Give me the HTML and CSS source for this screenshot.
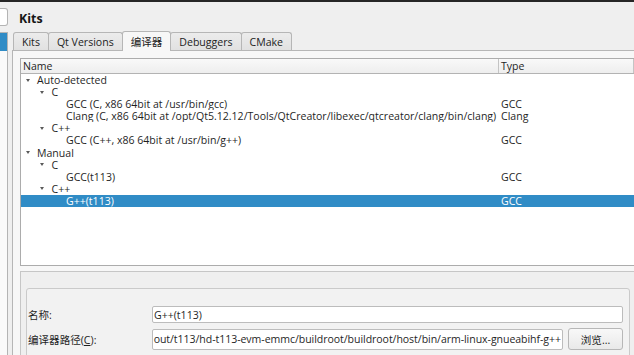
FILE: index.html
```html
<!DOCTYPE html>
<html lang="zh">
<head>
<meta charset="utf-8">
<title>Kits</title>
<link rel="stylesheet" href="styles.css">
</head>
<body>
<div class="topbar"></div>
<div class="window">
  <aside class="sidebar">
    <div class="search"></div>
    <div class="kitlist"><div class="kit-sel"></div></div>
  </aside>
  <main class="content">
    <h1 class="title">Kits</h1>
    <div class="tabs">
      <div class="tab">Kits</div>
      <div class="tab">Qt Versions</div>
      <div class="tab active">编译器</div>
      <div class="tab">Debuggers</div>
      <div class="tab">CMake</div>
    </div>
    <div class="pane">
      <div class="tree">
        <div class="thead">
          <div class="th th-name">Name</div>
          <div class="th th-type">Type</div>
        </div>
        <div class="tbody">
          <div class="row"><div class="cell-name l0"><span class="arrow"></span>Auto-detected</div><div class="cell-type"></div></div>
          <div class="row"><div class="cell-name l1"><span class="arrow"></span>C</div><div class="cell-type"></div></div>
          <div class="row"><div class="cell-name l2"><span class="leaf"></span>GCC (C, x86 64bit at /usr/bin/gcc)</div><div class="cell-type">GCC</div></div>
          <div class="row"><div class="cell-name l2"><span class="leaf"></span>Clang (C, x86 64bit at /opt/Qt5.12.12/Tools/QtCreator/libexec/qtcreator/clang/bin/clang)</div><div class="cell-type">Clang</div></div>
          <div class="row"><div class="cell-name l1"><span class="arrow"></span>C++</div><div class="cell-type"></div></div>
          <div class="row"><div class="cell-name l2"><span class="leaf"></span>GCC (C++, x86 64bit at /usr/bin/g++)</div><div class="cell-type">GCC</div></div>
          <div class="row"><div class="cell-name l0"><span class="arrow"></span>Manual</div><div class="cell-type"></div></div>
          <div class="row"><div class="cell-name l1"><span class="arrow"></span>C</div><div class="cell-type"></div></div>
          <div class="row"><div class="cell-name l2"><span class="leaf"></span>GCC(t113)</div><div class="cell-type">GCC</div></div>
          <div class="row"><div class="cell-name l1"><span class="arrow"></span>C++</div><div class="cell-type"></div></div>
          <div class="row selected"><div class="cell-name l2"><span class="leaf"></span>G++(t113)</div><div class="cell-type">GCC</div></div>
        </div>
      </div>
      <div class="details">
        <div class="group">
          <div class="form">
            <label class="flabel">名称:</label>
            <div class="field name-field">G++(t113)</div>
            <label class="flabel">编译器路径(<u>C</u>):</label>
            <div class="path-row">
              <div class="field path-field"><span>out/t113/hd-t113-evm-emmc/buildroot/buildroot/host/bin/arm-linux-gnueabihf-g++</span></div>
              <button class="btn">浏览...</button>
            </div>
          </div>
        </div>
      </div>
    </div>
  </main>
</div>
</body>
</html>
```

FILE: styles.css
```css
* { box-sizing: border-box; }
html, body { margin: 0; height: 100%; }
body {
  background: #efefef;
  font-family: "Open Sans", "Noto Sans CJK SC", sans-serif;
  font-size: 10.55px;
  color: #1f1f1f;
  overflow: hidden;
}
.topbar { height: 2px; background: #262626; }
.window { display: flex; height: 353px; }

.sidebar { width: 8px; flex: none; display: flex; flex-direction: column; }
.search {
  margin-top: 6px; height: 18px; background: #fff;
  border: 1px solid #b4b4b4; border-left: none; border-radius: 0 3px 3px 0;
}
.kitlist {
  margin-top: 6px; flex: 1; background: #fafafa;
  border-top: 1px solid #b4b4b4; border-right: 1px solid #b4b4b4;
}
.kit-sel { height: 18px; background: #308cc6; }

.content { flex: 1; margin-left: 4px; min-width: 0; display: flex; flex-direction: column; }
.title {
  margin: 0; height: 29px; padding: 3px 0 0 7px;
  display: flex; align-items: center;
  font-size: 12.4px; font-weight: 700; color: #161616;
}

.tabs { display: flex; align-items: flex-end; height: 19px; padding-left: 1px; position: relative; z-index: 1; }
.tab {
  height: 18px; padding: 0 8px; margin-right: -1px;
  border: 1px solid #b6b6b6; border-bottom: none; border-radius: 3px 3px 0 0;
  background: linear-gradient(#ececec, #e1e1e1);
  display: flex; align-items: center; color: #222;
}
.tab.active { height: 20px; margin-bottom: -1px; background: #f7f7f7; position: relative; z-index: 2; }

.pane {
  flex: 1; min-height: 0; overflow: hidden;
  background: #f7f7f7;
  border-top: 1px solid #b6b6b6; border-left: 1px solid #b6b6b6;
  padding: 7px 0 0 7px;
  display: flex; flex-direction: column;
}

.tree {
  flex: none; height: 208px; background: #fff;
  border: 1px solid #acacac; border-right: none;
  overflow: hidden;
}
.thead {
  display: grid; grid-template-columns: 478px 1fr;
  height: 15px; border-bottom: 1px solid #b3b3b3;
  background: linear-gradient(#f9f9f9, #eeeeee);
}
.th { display: flex; align-items: center; line-height: 14px; color: #1f1f1f; }
.th-name { padding-left: 2px; border-right: 1px solid #c4c4c4; }
.th-type { padding-left: 2px; border-right: 1px solid #c4c4c4; }

.row { display: grid; grid-template-columns: 478px 1fr; height: 12.1px; line-height: 12.1px; }
.cell-name { display: flex; align-items: center; white-space: nowrap; overflow: hidden; }
.cell-type { padding-left: 2px; white-space: nowrap; }
.l0 { padding-left: 0; }
.l1 { padding-left: 14.5px; }
.l2 { padding-left: 29px; }
.arrow, .leaf { flex: none; width: 16px; height: 12px; display: flex; align-items: center; }
.arrow::before {
  content: ""; margin-left: 4.5px;
  border-left: 2.5px solid transparent; border-right: 2.5px solid transparent;
  border-top: 3px solid #5a5a5a;
}
.row.selected { background: #308cc6; color: #fff; }

.details {
  flex: 1; margin-top: 5px;
  background: #efefef;
  border-top: 1px solid #c6c6c6; border-left: 1px solid #c6c6c6;
  padding: 16px 4px 0 5px;
}
.group {
  height: 100px;
  border: 1px solid #cacaca; border-radius: 3px;
  background: #f2f2f2;
  padding: 17px 6px 0 1px;
}
.form { display: grid; grid-template-columns: 124px 1fr; row-gap: 5px; align-items: center; }
.flabel { color: #1f1f1f; white-space: nowrap; }
.flabel u { text-decoration-thickness: 1px; text-underline-offset: 1px; }
.field {
  background: #fff; border: 1px solid #bcbcbc; border-radius: 2px;
  padding-left: 1px; white-space: nowrap; overflow: hidden;
  display: flex; align-items: center; color: #1f1f1f;
}
.name-field { height: 17px; }
.path-row { display: flex; align-items: center; gap: 5px; min-width: 0; }
.path-field {
  flex: 1; min-width: 0; height: 21px;
  justify-content: flex-end; padding-right: 1px;
  letter-spacing: -0.05px;
}
.path-field span { flex: none; }
.btn {
  flex: none; width: 55px; height: 22px; padding: 0;
  font: inherit; color: #1f1f1f;
  background: linear-gradient(#f8f8f8, #e9e9e9);
  border: 1px solid #b7b7b7; border-radius: 3px;
}
```
